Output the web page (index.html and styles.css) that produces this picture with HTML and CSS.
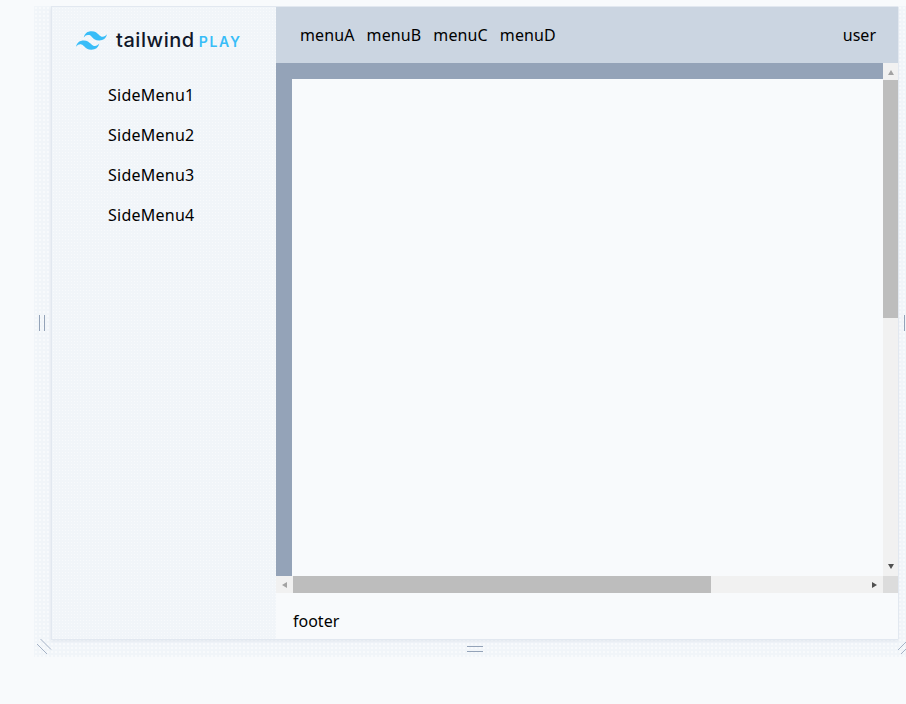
FILE: index.html
```html
<!DOCTYPE html>
<html lang="en">
<head>
<meta charset="utf-8">
<title>Tailwind Play layout</title>
<link rel="stylesheet" href="styles.css">
</head>
<body>
<div class="frame">
  <div class="app">
    <aside class="sidebar">
      <div class="brand">
        <svg class="brand-mark" viewBox="0 0 25 15" aria-hidden="true"><path d="M12.5 0C9.167 0 7.083 1.667 6.25 5c1.25-1.667 2.708-2.292 4.375-1.875.951.238 1.63.928 2.383 1.69C14.233 6.058 15.65 7.5 18.75 7.5c3.333 0 5.417-1.667 6.25-5-1.25 1.667-2.708 2.292-4.375 1.875-.951-.238-1.63-.928-2.383-1.69C17.017 1.442 15.6 0 12.5 0zM6.25 7.5C2.917 7.5.833 9.167 0 12.5c1.25-1.667 2.708-2.292 4.375-1.875.951.238 1.63.928 2.383 1.69C7.983 13.558 9.4 15 12.5 15c3.333 0 5.417-1.667 6.25-5-1.25 1.667-2.708 2.292-4.375 1.875-.951-.238-1.63-.928-2.383-1.69C10.517 8.942 9.1 7.5 6.25 7.5z"/></svg>
        <span class="brand-name">tailwind</span>
        <span class="brand-play">PLAY</span>
      </div>
      <nav class="side-menu">
        <a class="side-item">SideMenu1</a>
        <a class="side-item">SideMenu2</a>
        <a class="side-item">SideMenu3</a>
        <a class="side-item">SideMenu4</a>
      </nav>
    </aside>
    <div class="workspace">
      <header class="topbar">
        <nav class="top-menu">
          <a>menuA</a><a>menuB</a><a>menuC</a><a>menuD</a>
        </nav>
        <span class="user">user</span>
      </header>
      <div class="scroller">
        <div class="viewport"><div class="content"></div></div>
        <div class="vbar">
          <span class="arrow-up"></span>
          <span class="vthumb"></span>
          <span class="vrest"></span>
          <span class="arrow-down"></span>
        </div>
        <div class="hbar">
          <span class="arrow-left"></span>
          <span class="hthumb"></span>
          <span class="hrest"></span>
          <span class="arrow-right"></span>
        </div>
        <div class="corner"></div>
      </div>
      <footer class="footer">footer</footer>
    </div>
  </div>
  <span class="handle-left"></span>
  <span class="handle-right"></span>
  <span class="handle-bottom"></span>
  <svg class="grip-left" viewBox="0 0 16 16" aria-hidden="true"><path d="M4.5 1 15 11.5M1 6 11 16"/></svg>
  <svg class="grip-right" viewBox="0 0 16 16" aria-hidden="true"><path d="M2 10 12 0M5 14 15 4"/></svg>
</div>
</body>
</html>
```
FILE: styles.css
```css
* { box-sizing: border-box; }
html, body { height: 100%; }
body {
  margin: 0;
  overflow: hidden;
  background: #f8fafc;
  color: #000;
  font-family: "Noto Sans", "Open Sans", sans-serif;
  font-size: 16px;
  line-height: 24px;
}
.frame {
  position: relative;
  width: 881px;
  height: 651px;
  margin: 6px 0 0 34px;
  padding: 1px 17px 18px;
  background-color: #f1f5f9;
  background-image: radial-gradient(#f8fafc 0.8px, transparent 0.9px);
  background-size: 4px 4px;
}
.app {
  display: flex;
  height: 632px;
  box-shadow: 0 -1px 0 #e2e8f0, 1px 0 0 #e2e8f0, 0 1px 0 #e2e8f0, 0 2px 3px rgba(148, 163, 184, .2);
}
.sidebar {
  width: 225px;
  flex: none;
  border-left: 1px solid #e2e8f0;
  background-color: #f1f5f9;
  background-image: radial-gradient(#f8fafc 0.8px, transparent 0.9px);
  background-size: 3px 3px;
}
.brand {
  display: flex;
  align-items: center;
  height: 66px;
  padding-left: 24px;
}
.brand-mark { width: 31px; height: 19px; fill: #38bdf8; flex: none; }
.brand-name {
  margin-left: 9px;
  font-family: "Inter", sans-serif;
  font-size: 20px;
  font-weight: 500;
  letter-spacing: .55px;
  color: #0f172a;
}
.brand-play {
  margin-left: 4px;
  margin-top: 3px;
  font-family: "Inter", sans-serif;
  font-size: 14px;
  font-weight: 600;
  letter-spacing: 1.7px;
  color: #38bdf8;
}
.side-menu { display: flex; flex-direction: column; padding-top: 2px; }
.side-item { display: block; height: 40px; line-height: 40px; padding-left: 56px; letter-spacing: .25px; }
.workspace { flex: 1; min-width: 0; display: flex; flex-direction: column; }
.topbar {
  flex: none;
  height: 56px;
  display: flex;
  align-items: center;
  justify-content: space-between;
  padding: 0 22px 0 24px;
  background: #cbd5e1;
}
.top-menu { display: flex; gap: 12px; letter-spacing: .12px; }
.scroller {
  flex: none;
  height: 530px;
  display: grid;
  grid-template-columns: 607px 15px;
  grid-template-rows: 513px 17px;
}
.viewport {
  background: #94a3b8;
  padding: 16px 0 0 16px;
  overflow: hidden;
}
.content { height: 100%; background: #f8fafc; }
.vbar, .hbar { background: #f1f1f1; display: flex; }
.vbar { flex-direction: column; align-items: center; }
.hbar { align-items: center; }
.vthumb { width: 15px; height: 238px; flex: none; background: #bdbdbd; }
.hthumb { width: 418px; height: 17px; flex: none; background: #bdbdbd; }
.vrest, .hrest { flex: 1; }
.arrow-up, .arrow-down, .arrow-left, .arrow-right { flex: none; width: 0; height: 0; border-style: solid; border-color: transparent; }
.arrow-up { margin: 7px 0 5px; border-width: 0 3.5px 5px; border-bottom-color: #a3a3a3; }
.arrow-down { margin: 0 0 7px; border-width: 5px 3.5px 0; border-top-color: #505050; }
.arrow-left { margin: 0 6px 0 6px; border-width: 3.5px 5px 3.5px 0; border-right-color: #a3a3a3; }
.arrow-right { margin: 0 6px 0 7px; border-width: 3.5px 0 3.5px 5px; border-left-color: #505050; }
.corner { background: #dcdcdc; }
.footer {
  flex: none;
  height: 46px;
  padding: 16px 16px 0 17px;
  background: #f8fafc;
}
.handle-left {
  position: absolute;
  left: 5px;
  top: 309px;
  width: 6px;
  height: 16px;
  border-left: 1px solid #94a3b8;
  border-right: 1px solid #94a3b8;
}
.handle-right {
  position: absolute;
  left: 870px;
  top: 309px;
  width: 6px;
  height: 16px;
  border-left: 1px solid #94a3b8;
  border-right: 1px solid #94a3b8;
}
.handle-bottom {
  position: absolute;
  left: 433px;
  top: 640px;
  width: 16px;
  height: 6px;
  border-top: 1px solid #94a3b8;
  border-bottom: 1px solid #94a3b8;
}
.grip-left, .grip-right {
  position: absolute;
  width: 16px;
  height: 16px;
  fill: none;
  stroke: #a6b3c6;
  stroke-width: 1;
}
.grip-left { left: 2px; top: 632px; }
.grip-right { left: 862px; top: 634px; }
```
